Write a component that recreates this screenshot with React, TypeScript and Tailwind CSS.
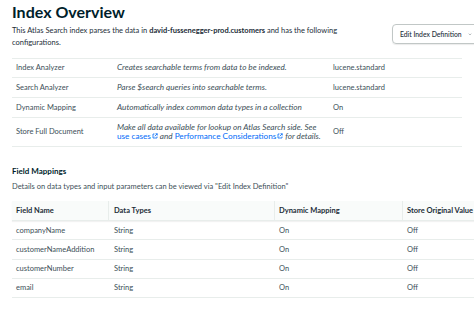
import React from "react";

const ExtIcon = () => (
  <svg width="6" height="6" viewBox="0 0 12 12" className="inline-block align-top ml-[1px] mt-[1px]" fill="none" stroke="#016bf8" strokeWidth="1.6">
    <path d="M5 2H2v8h8V7" />
    <path d="M7 1.5h3.5V5M10.5 1.5 5.5 6.5" />
  </svg>
);

const overviewRows: { label: string; desc: React.ReactNode; value: string; h: string }[] = [
  { label: "Index Analyzer", desc: "Creates searchable terms from data to be indexed.", value: "lucene.standard", h: "h-[19px]" },
  { label: "Search Analyzer", desc: "Parse $search queries into searchable terms.", value: "lucene.standard", h: "h-[20px]" },
  { label: "Dynamic Mapping", desc: "Automatically index common data types in a collection", value: "On", h: "h-[20px]" },
  {
    label: "Store Full Document",
    desc: (
      <>
        <span>Make all data available for lookup on Atlas Search side. See</span>
        <br />
        <span className="not-italic text-[#016bf8]">use cases</span>
        <ExtIcon /> <span>and</span> <span className="not-italic text-[#016bf8]">Performance Considerations</span>
        <ExtIcon /> <span>for details.</span>
      </>
    ),
    value: "Off",
    h: "h-[29px]",
  },
];

const fields = ["companyName", "customerNameAddition", "customerNumber", "email"];

export default function App() {
  return (
    <div
      className="w-[474px] h-[322px] overflow-hidden bg-white text-[#3d4f58]"
      style={{ fontFamily: "Lato, 'Noto Sans', sans-serif" }}
    >
      <div className="w-[500px] pl-[12px] pt-[2px]">
        <div className="text-[16px] leading-[20px] font-bold text-[#001e2b]">Index Overview</div>
        <div className="flex items-start mt-[3px]">
          <div className="w-[345px] text-[7.5px] leading-[12px] text-[#1c2d38]">
            <div>
              <span>This Atlas Search index parses the data in </span>
              <span className="font-bold">david-fussenegger-prod.customers</span>
              <span> and has the following</span>
            </div>
            <div>configurations.</div>
          </div>
          <div className="ml-[35px] mt-[-1px] h-[20px] w-[96px] shrink-0 whitespace-nowrap flex items-center border border-[#c1c7c6] rounded-[4px] pl-[7px] text-[6.8px] font-medium text-[#1c2d38] shadow-[0_1px_1px_rgba(0,0,0,0.08)]">
            <span>Edit Index Definition</span>
            <svg width="6" height="6" viewBox="0 0 10 10" className="ml-[5px]">
              <path d="M3 4.5 5 6.5 7 4.5" fill="none" stroke="#889397" strokeWidth="1.2" />
            </svg>
          </div>
        </div>

        <div className="mt-[9px] w-[450px] border-t border-[#e8edeb] text-[7.5px]">
          {overviewRows.map((r) => (
            <div key={r.label} className={`flex items-center border-b border-[#e8edeb] ${r.h}`}>
              <div className="w-[105px] pl-[4px]">{r.label}</div>
              <div className="w-[216px] italic text-[8.2px] leading-[9.5px] whitespace-nowrap">{r.desc}</div>
              <div>{r.value}</div>
            </div>
          ))}
        </div>

        <div className="mt-[18px] text-[8px] font-bold text-[#001e2b] leading-[12px]">Field Mappings</div>
        <div className="mt-[4px] text-[7.5px] leading-[12px]">
          Details on data types and input parameters can be viewed via "Edit Index Definition"
        </div>

        <div className="mt-[8px] w-[478px] text-[7.5px]">
          <div className="flex h-[20px] items-center bg-[#f9fbfa] border-b border-[#e8edeb] font-bold text-[#1c2d38] shadow-[0_1px_1px_rgba(0,0,0,0.05)]">
            <div className="w-[97px] pl-[4px] h-full flex items-center border-r border-[#e8edeb]">Field Name</div>
            <div className="w-[166px] pl-[5px] h-full flex items-center border-r border-[#e8edeb]">Data Types</div>
            <div className="w-[128px] pl-[4px] h-full flex items-center border-r border-[#e8edeb]">Dynamic Mapping</div>
            <div className="pl-[4px]">Store Original Value</div>
          </div>
          {fields.map((f) => (
            <div key={f} className="flex h-[19.3px] items-center border-b border-[#e8edeb]">
              <div className="w-[97px] pl-[4px]">{f}</div>
              <div className="w-[166px] pl-[5px]">String</div>
              <div className="w-[128px] pl-[4px]">On</div>
              <div className="pl-[4px]">Off</div>
            </div>
          ))}
        </div>
      </div>
    </div>
  );
}
